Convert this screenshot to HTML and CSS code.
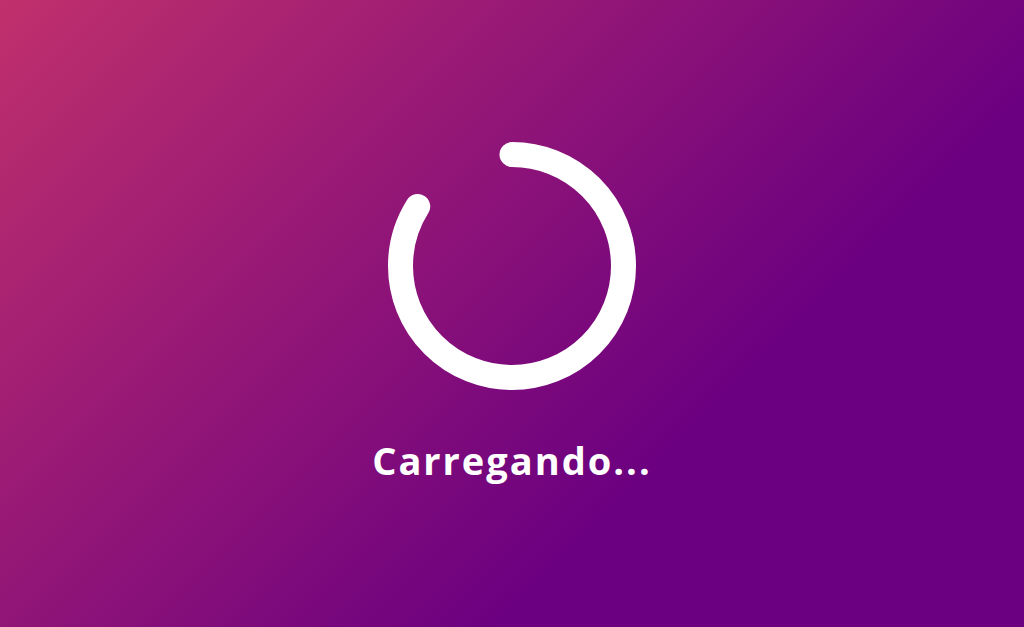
FILE: index.html
```html
<!DOCTYPE html>
<html lang="pt-BR">
<head>
<meta charset="utf-8">
<title>Carregando</title>
<link rel="stylesheet" href="styles.css">
</head>
<body>
<main class="loader">
  <svg class="spinner" width="250" height="250" viewBox="0 0 250 250" aria-hidden="true">
    <circle class="spinner-arc" cx="125" cy="125" r="111.5"></circle>
  </svg>
  <p class="loader-text">Carregando...</p>
</main>
</body>
</html>
```
FILE: styles.css
```css
html, body {
  margin: 0;
  padding: 0;
  height: 100%;
}
body {
  background: linear-gradient(135deg, #c0306c 0%, #6b0080 68%, #6b0080 100%);
  font-family: "Open Sans", "Liberation Sans", sans-serif;
}
.loader {
  height: 100vh;
  display: flex;
  flex-direction: column;
  align-items: center;
  justify-content: center;
  gap: 42px;
}
.spinner {
  display: block;
}
.spinner-arc {
  fill: none;
  stroke: #ffffff;
  stroke-width: 25;
  stroke-linecap: round;
  stroke-dasharray: 587.7 1000;
  transform: rotate(-90deg);
  transform-origin: 125px 125px;
}
.loader-text {
  margin: 0;
  color: #ffffff;
  font-size: 38px;
  font-weight: 700;
  line-height: 54px;
  letter-spacing: 2px;
}
```
